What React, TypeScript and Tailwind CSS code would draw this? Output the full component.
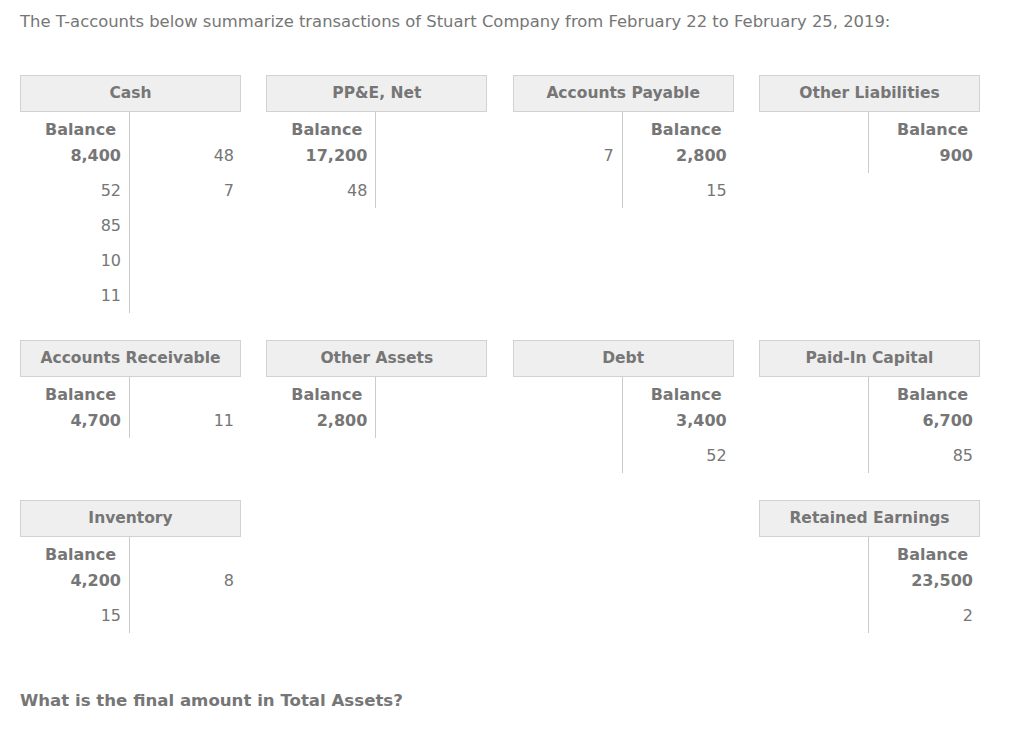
import React from "react";

type Side = { balance?: string; first?: string; rows?: string[] };
type Acct = { name: string; left: Side; right: Side };

const FONT = { fontFamily: '"DejaVu Sans", Verdana, sans-serif' };

function SideCol({ side, border }: { side: Side; border?: boolean }) {
  return (
    <div className={border ? "border-r border-[#cccccc] pr-[8px] text-right" : "pr-[7px] text-right"}>
      <div className="h-[61px] pt-[5px]">
        <div className="h-[26px] leading-[26px] font-bold text-[16px] pr-[5px]">{side.balance ? "Balance" : ""}</div>
        <div className={side.balance ? "h-[26px] leading-[26px] font-bold text-[16px]" : "h-[26px] leading-[26px] text-[16px]"}>
          {side.balance ?? side.first ?? ""}
        </div>
      </div>
      {(side.rows ?? []).map((r, i) => (
        <div key={i} className="h-[35px] leading-[35px] text-[16px]">
          {r}
        </div>
      ))}
    </div>
  );
}

function TAccount({ a }: { a: Acct }) {
  const lrows = (a.left.rows ?? []).length;
  const rrows = (a.right.rows ?? []).length;
  const n = Math.max(lrows, rrows);
  const pad = (s: Side, k: number): Side => ({ ...s, rows: [...(s.rows ?? []), ...Array(n - k).fill("")] });
  return (
    <div className="w-[221px]">
      <div className="h-[37px] bg-[#efefef] border border-[#d2d2d2] flex items-center justify-center font-bold text-[15.5px]">
        {a.name}
      </div>
      <div className="grid grid-cols-[110px_111px]">
        <SideCol side={pad(a.left, lrows)} border />
        <SideCol side={pad(a.right, rrows)} />
      </div>
    </div>
  );
}

const row1: Acct[] = [
  { name: "Cash", left: { balance: "8,400", rows: ["52", "85", "10", "11"] }, right: { first: "48", rows: ["7"] } },
  { name: "PP&E, Net", left: { balance: "17,200", rows: ["48"] }, right: {} },
  { name: "Accounts Payable", left: { first: "7" }, right: { balance: "2,800", rows: ["15"] } },
  { name: "Other Liabilities", left: {}, right: { balance: "900" } },
];
const row2: Acct[] = [
  { name: "Accounts Receivable", left: { balance: "4,700" }, right: { first: "11" } },
  { name: "Other Assets", left: { balance: "2,800" }, right: {} },
  { name: "Debt", left: {}, right: { balance: "3,400", rows: ["52"] } },
  { name: "Paid-In Capital", left: {}, right: { balance: "6,700", rows: ["85"] } },
];
const inventory: Acct = { name: "Inventory", left: { balance: "4,200", rows: ["15"] }, right: { first: "8" } };
const retained: Acct = { name: "Retained Earnings", left: {}, right: { balance: "23,500", rows: ["2"] } };

export default function App() {
  return (
    <div className="w-[1024px] h-[735px] bg-white text-[#767676] px-[20px] pt-[10px]" style={FONT}>
      <p className="text-[16.4px] leading-[22px] pt-[1px]">
        The T-accounts below summarize transactions of Stuart Company from February 22 to February 25, 2019:
      </p>
      <div className="mt-[42px] grid grid-cols-[repeat(4,221px)] gap-x-[25.33px] gap-y-[27px] items-start">
        {row1.map((a) => (
          <TAccount key={a.name} a={a} />
        ))}
        {row2.map((a) => (
          <TAccount key={a.name} a={a} />
        ))}
        <TAccount a={inventory} />
        <div />
        <div />
        <TAccount a={retained} />
      </div>
      <p className="mt-[57px] font-bold text-[16.6px] leading-[22px]">What is the final amount in Total Assets?</p>
    </div>
  );
}
